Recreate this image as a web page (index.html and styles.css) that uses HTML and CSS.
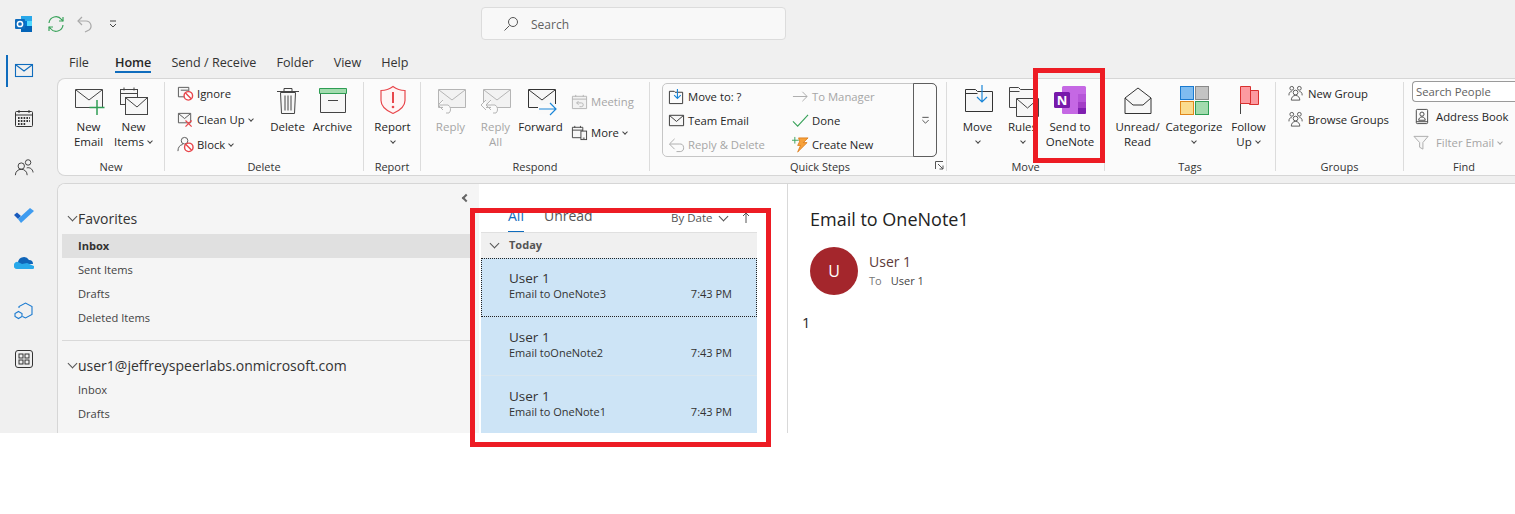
FILE: index.html
```html
<!DOCTYPE html>
<html lang="en">
<head>
<meta charset="utf-8">
<title>Outlook</title>
<link rel="stylesheet" href="styles.css">
</head>
<body>
<div class="app">
  <header class="titlebar">
    <div class="qat">
      <svg class="qat-logo" viewBox="0 0 18 18"><path fill="#28a8ea" d="M6 1h11v5H6z"/><path fill="#0078d4" d="M6 6h6v5H6z"/><path fill="#50d9ff" d="M12 6h5v5h-5z"/><path fill="#0364b8" d="M6 11h11v6H6z"/><rect fill="#0f6cbd" x="0" y="4" width="10" height="10" rx="1"/><circle cx="5" cy="9" r="2.600" fill="none" stroke="#fff" stroke-width="1.500"/></svg>
      <svg class="qat-sync" viewBox="0 0 18 18" fill="none" stroke="#3aa35b" stroke-width="1.200"><path d="M2 8a7 7 0 0 1 12.500-3.500L16 6"/><path d="M16 2v4h-4"/><path d="M16 10a7 7 0 0 1-12.500 3.500L2 12"/><path d="M2 16v-4h4"/></svg>
      <svg class="qat-undo" viewBox="0 0 18 18" fill="none" stroke="#a9a9a9" stroke-width="1.200"><path d="M6 2 2 6l4 4"/><path d="M2 6h8a5 5 0 0 1 3 9l-4 2"/></svg>
      <svg class="qat-more" viewBox="0 0 10 10" fill="none" stroke="#444" stroke-width="1"><path d="M2 2h6M2 5l3 3 3-3"/></svg>
    </div>
    <div class="searchbox">
      <svg class="search-ico" viewBox="0 0 16 16" fill="none" stroke="#555" stroke-width="1"><circle cx="10" cy="6" r="4.500"/><path d="M6.500 9.500 1.500 14.500"/></svg>
      <span class="search-text">Search</span>
    </div>
  </header>

  <div class="body">
    <nav class="rail">
      <div class="rail-item rail-active"><svg viewBox="0 0 20 20" fill="none" stroke="#0f6cbd" stroke-width="1.100"><rect x="1.500" y="3.500" width="17" height="12"/><path d="m2 4 8 6 8-6"/></svg></div>
      <div class="rail-item"><svg viewBox="0 0 20 20" fill="none" stroke="#333" stroke-width="1"><rect x="1.500" y="2.500" width="17" height="15" rx="1"/><path d="M5 1v3M15 1v3M2 6h16" /><path stroke-dasharray="1.600 1.200" stroke-width="2" d="M4 9h12M4 12h12M4 15h8"/></svg></div>
      <div class="rail-item"><svg viewBox="0 0 22 20" fill="none" stroke="#333" stroke-width="1"><circle cx="8" cy="9" r="3.500"/><path d="M1.500 19c0-4 3-6.500 6.500-6.500s6.500 2.500 6.500 6.500"/><circle cx="15.500" cy="5" r="3"/><path d="M14 11c3-1 6.500 1 7 5"/></svg></div>
      <div class="rail-item"><svg viewBox="0 0 20 20"><path fill="#185abd" d="M0 10l3-2.500 4 3.500-3 3z"/><path fill="#3f9cf0" d="M4 14 16 3l4 3L7 18z"/></svg></div>
      <div class="rail-item"><svg viewBox="0 0 20 20"><path fill="#0f64b8" d="M4 9a6 6 0 0 1 11-2 4 4 0 0 1 4 4H2z"/><path fill="#28a8ea" d="M0 12a3 3 0 0 1 4-3l4 2 5-1 7 3a2 2 0 0 1-2 3H3a3 3 0 0 1-3-4z"/></svg></div>
      <div class="rail-item"><svg viewBox="0 0 20 20" fill="none" stroke="#1a7ad0" stroke-width="1.100"><path d="M5 7V5.500L11.500 2 18 5.500v8L11.500 17l-3-1.500"/><path d="M4.500 10.500 8 12.500v3L4.500 17.500 1 15.500v-3z"/></svg></div>
      <div class="rail-item"><svg viewBox="0 0 20 20" fill="none" stroke="#333" stroke-width="1"><rect x="1.500" y="1.500" width="17" height="17" rx="2.500"/><rect x="5" y="5" width="4" height="4"/><rect x="11" y="5" width="4" height="4"/><rect x="5" y="11" width="4" height="4"/><rect x="11" y="11" width="4" height="4"/></svg></div>
    </nav>

    <div class="main">
      <div class="tabs">
        <span class="tab tab-file">File</span>
        <span class="tab tab-active">Home</span>
        <span class="tab">Send / Receive</span>
        <span class="tab">Folder</span>
        <span class="tab">View</span>
        <span class="tab">Help</span>
      </div>

      <section class="ribbon">
        <div class="group g-new">
          <div class="items">
            <div class="btn">
              <svg class="lg" viewBox="0 0 32 32" fill="#f7f7f7" stroke="#444"><path d="M2.500 4.500h27v18h-27z"/><path fill="none" d="m3 5 13 10L29 5"/><path fill="none" stroke="#2f9e54" stroke-width="1.500" d="M24 15v15M16.500 22.500h15"/></svg>
              <span class="lbl">New<br>Email</span>
            </div>
            <div class="btn">
              <svg class="lg" viewBox="0 0 32 32" fill="#f7f7f7" stroke="#444"><rect x="2.500" y="4.500" width="17" height="15"/><path d="M2.500 8.500h17M6 2.500v3M16 2.500v3" fill="none"/><rect x="7.500" y="12.500" width="22" height="17"/><path fill="none" d="m8 13 11 9 10-9"/></svg>
              <span class="lbl">New<br>Items <i class="chev"></i></span>
            </div>
          </div>
          <div class="glabel">New</div>
        </div>

        <div class="group g-delete">
          <div class="items">
            <div class="stack">
              <div class="row"><svg class="sm" viewBox="0 0 18 18" fill="#f7f7f7" stroke="#555"><path d="M1.500 2.500h11v10h-11z"/><path fill="none" d="M4 5.500h8"/><circle cx="12" cy="11.500" r="4.500" fill="#fff" stroke="#e8474c" stroke-width="1.500"/><path stroke="#e8474c" stroke-width="1.500" d="m9 8.500 6 6"/></svg><span>Ignore</span></div>
              <div class="row"><svg class="sm" viewBox="0 0 18 18" fill="#f7f7f7" stroke="#555"><path d="M1.500 2.500h13v10h-13z"/><path fill="none" d="m2 3 6 5 6-5"/><path fill="none" stroke="#e8474c" stroke-width="1.300" d="m9 10 6.500 6.500M15.500 10 9 16.500"/></svg><span>Clean Up <i class="chev"></i></span></div>
              <div class="row"><svg class="sm" viewBox="0 0 18 18" fill="none" stroke="#555"><circle cx="8" cy="5" r="3.500"/><path d="M1 16c0-4 2-6.500 5-7"/><circle cx="12.500" cy="12" r="4.500" fill="#fff" stroke="#e8474c" stroke-width="1.500"/><path stroke="#e8474c" stroke-width="1.500" d="m9.500 9 6 6"/></svg><span>Block <i class="chev"></i></span></div>
            </div>
            <div class="btn">
              <svg class="lg" viewBox="0 0 32 32" fill="#f7f7f7" stroke="#444"><path d="M8.500 7.500h15l-1 21h-13z" /><path fill="none" d="M5 6.500h22M12 6V3.500h8V6M13 10.500v15M16 10.500v15M19 10.500v15"/></svg>
              <span class="lbl">Delete</span>
            </div>
            <div class="btn">
              <svg class="lg" viewBox="0 0 32 32" stroke="#444"><path fill="#f7f7f7" d="M3.500 8.500h25v19h-25z"/><path fill="#a2dbae" stroke="#2f9e54" d="M2.500 3.500h27v5h-27z"/><path fill="none" d="M11 15.500h10"/></svg>
              <span class="lbl">Archive</span>
            </div>
          </div>
          <div class="glabel">Delete</div>
        </div>

        <div class="group g-report">
          <div class="items">
            <div class="btn btn-wide">
              <svg class="lg" viewBox="0 0 32 32"><path fill="#fff5f5" stroke="#e8474c" stroke-width="1.200" d="M16 1.500c4 3 8 4 12 4v10c0 6-5 10-12 13-7-3-12-7-12-13v-10c4 0 8-1 12-4z"/><path stroke="#e8474c" stroke-width="2" d="M16 7v11"/><circle cx="16" cy="22" r="1.300" fill="#e8474c"/></svg>
              <span class="lbl">Report<br><i class="chev"></i></span>
            </div>
          </div>
          <div class="glabel">Report</div>
        </div>

        <div class="group g-respond">
          <div class="items">
            <div class="btn off">
              <svg class="lg" viewBox="0 0 32 32" fill="#f2f2f2" stroke="#b5b5b5"><path d="M3.500 4.500h27v18h-27z"/><path fill="none" d="m4 5 13 10L30 5"/><path fill="#fafafa" d="M8 15l-5 5 5 5M3 20h10a5 5 0 0 1 1 8h-3"/></svg>
              <span class="lbl">Reply</span>
            </div>
            <div class="btn off">
              <svg class="lg" viewBox="0 0 32 32" fill="#f2f2f2" stroke="#b5b5b5"><path d="M3.500 4.500h27v18h-27z"/><path fill="none" d="m4 5 13 10L30 5"/><path fill="#fafafa" d="M6 15l-5 5 5 5M11 15l-5 5 5 5M6 20h9a5 5 0 0 1 1 8h-3"/></svg>
              <span class="lbl">Reply<br>All</span>
            </div>
            <div class="btn">
              <svg class="lg" viewBox="0 0 32 32" fill="#f7f7f7" stroke="#333"><path d="M3.500 4.500h27v18h-27z"/><path fill="none" d="m4 5 13 10L30 5"/><path fill="#fafafa" stroke="none" d="M13 19h19v10H13z"/><path fill="none" stroke="#1a86d8" stroke-width="1.200" d="M14 24h17M25 18l6 6-6 6"/></svg>
              <span class="lbl">Forward</span>
            </div>
            <div class="stack stack-respond">
              <div class="row off"><svg class="sm" viewBox="0 0 18 18" fill="#f2f2f2" stroke="#b5b5b5"><path d="M1.500 3.500h15v13h-15zM1.500 6.500h15M5 2v2M13 2v2"/><path fill="none" d="M8 8.500 6 10.500l2 2M6 10.500h5a2 2 0 0 1 0 4h-2"/></svg><span>Meeting</span></div>
              <div class="row"><svg class="sm" viewBox="0 0 18 18" fill="#f7f7f7" stroke="#444"><path d="M1.500 3.500h11v11h-11zM1.500 6.500h11M4 2v2M10 2v2"/><rect x="10.500" y="7.500" width="6" height="9"/><path d="M12.500 15h2"/></svg><span>More <i class="chev"></i></span></div>
            </div>
          </div>
          <div class="glabel">Respond</div>
        </div>

        <div class="group g-quick">
          <div class="items">
            <div class="qs">
              <div class="qs-grid">
                <div class="row qrow"><svg class="sm" viewBox="0 0 18 18" fill="none" stroke="#333"><path d="M1.500 3.500h5l1 1h8v12h-14z"/><path stroke="#1a86d8" stroke-width="1.200" d="M10 1v10M6.500 7.500 10 11l3.500-3.500"/></svg><span>Move to: ?</span></div>
                <div class="row qrow off"><svg class="sm" viewBox="0 0 18 18" fill="none" stroke="#aaa"><path d="M1 9h15M11 4l5 5-5 5"/></svg><span>To Manager</span></div>
                <div class="row qrow"><svg class="sm" viewBox="0 0 18 18" fill="#f7f7f7" stroke="#333"><path d="M1.500 3.500h15v11h-15z"/><path fill="none" d="m2 4 7 6 7-6"/></svg><span>Team Email</span></div>
                <div class="row qrow"><svg class="sm" viewBox="0 0 18 18" fill="none" stroke="#3aa35b" stroke-width="1.200"><path d="m1 10 5 5L17 3"/></svg><span>Done</span></div>
                <div class="row qrow off"><svg class="sm" viewBox="0 0 18 18" fill="none" stroke="#aaa"><path d="M7 3 1.500 8.500 7 14M2 8.500h10a4 4 0 0 1 1 8H9"/></svg><span>Reply &amp; Delete</span></div>
                <div class="row qrow"><svg class="sm" viewBox="0 0 18 18"><path fill="#f7a13a" stroke="#d9730d" stroke-width=".8" d="M7 2h10l-5 5h4L6 17l3-7H6l2-4z"/><path stroke="#3aa35b" fill="none" d="M3 1v7M0 4.500h7"/></svg><span>Create New</span></div>
              </div>
              <div class="qs-more"><svg viewBox="0 0 10 10" fill="none" stroke="#444" stroke-width="1"><path d="M1.500 1.500h7M1.500 4.500 5 8l3.500-3.500"/></svg></div>
            </div>
          </div>
          <div class="glabel glabel-quick">Quick Steps<svg class="launcher" viewBox="0 0 9 9" fill="none" stroke="#555"><path d="M.5 8V.5H8M3 3l5 5M8 4.500V8H4.500"/></svg></div>
        </div>

        <div class="group g-move">
          <div class="items">
            <div class="btn">
              <svg class="lg" viewBox="0 0 32 32" fill="none" stroke="#333"><path fill="#f7f7f7" d="M3.500 4.500h10l2 2h15v20h-27z"/><path d="M3.500 8.500h12"/><path stroke="#1a86d8" stroke-width="1.200" d="M20 0v17M15 12l5 5 5-5"/></svg>
              <span class="lbl">Move<br><i class="chev"></i></span>
            </div>
            <div class="btn">
              <svg class="lg" viewBox="0 0 32 32" fill="#f7f7f7" stroke="#444"><path d="M2.500 2.500h9l2 2h13v18h-24z"/><path fill="none" d="M2.500 6.500h10"/><path d="M9.500 13.500h22v18h-22z"/><path fill="none" d="m10 14 10.500 9L31 14"/></svg>
              <span class="lbl">Rules<br><i class="chev"></i></span>
            </div>
            <div class="btn btn-onenote">
              <svg class="lg" viewBox="0 0 32 32"><rect x="8" y="1" width="24" height="28" rx="1.500" fill="#c568e4"/><path fill="#b655d8" d="M24 9h8v8h-8z"/><path fill="#a33ec6" d="M24 17h8v6h-8z"/><path fill="#7f1fb0" d="M24 23h8v4.500a1.500 1.500 0 0 1-1.500 1.500H24z"/><rect x="0" y="7" width="16" height="16" rx="1.500" fill="#7719aa"/><text class="on-n" x="8" y="19.500" text-anchor="middle">N</text></svg>
              <span class="lbl">Send to<br>OneNote</span>
            </div>
          </div>
          <div class="glabel">Move</div>
        </div>

        <div class="group g-tags">
          <div class="items">
            <div class="btn">
              <svg class="lg" viewBox="0 0 32 32" fill="#f7f7f7" stroke="#333"><path d="M3 13 16 3l13 10v15.500H3z"/><path fill="none" d="m3 13 8 7h10l8-7"/></svg>
              <span class="lbl">Unread/<br>Read</span>
            </div>
            <div class="btn btn-cat">
              <svg class="lg" viewBox="0 0 32 32"><rect x="2.500" y="1.500" width="13" height="13" fill="#7fbcf0" stroke="#1a7ad0"/><rect x="17.500" y="1.500" width="13" height="13" fill="#c3c3c3" stroke="#8a8a8a"/><rect x="2.500" y="16.500" width="13" height="13" fill="#fbdc8f" stroke="#e0861a"/><rect x="17.500" y="16.500" width="13" height="13" fill="#a2dbae" stroke="#2f9e54"/></svg>
              <span class="lbl">Categorize<br><i class="chev"></i></span>
            </div>
            <div class="btn">
              <svg class="lg" viewBox="0 0 32 32" stroke="#d9302f"><path fill="none" stroke="#444" d="M7.500 2v27"/><path fill="#fc9aa0" d="M16.500 5.500h9v14h-9z"/><path fill="#fc9aa0" d="M7.500 1.500h10v17h-10z"/></svg>
              <span class="lbl">Follow<br>Up <i class="chev"></i></span>
            </div>
          </div>
          <div class="glabel">Tags</div>
        </div>

        <div class="group g-groups">
          <div class="items">
            <div class="stack">
              <div class="row"><svg class="sm" viewBox="0 0 18 18" fill="none" stroke="#555"><circle cx="4" cy="3.500" r="2"/><circle cx="12" cy="3.500" r="2"/><circle cx="8" cy="8" r="2.500"/><path d="M1 11c0-3 1-4 3-4M15 11c0-3-1-4-3-4M3.500 16c0-3 2-5 4.500-5s4.500 2 4.500 5z"/></svg><span>New Group</span></div>
              <div class="row"><svg class="sm" viewBox="0 0 18 18" fill="none" stroke="#555"><circle cx="4" cy="3.500" r="2"/><circle cx="12" cy="3.500" r="2"/><circle cx="8" cy="8" r="2.500"/><path d="M1 11c0-3 1-4 3-4M15 11c0-3-1-4-3-4M3.500 16c0-3 2-5 4.500-5s4.500 2 4.500 5z"/></svg><span>Browse Groups</span></div>
            </div>
          </div>
          <div class="glabel">Groups</div>
        </div>

        <div class="group g-find">
          <div class="items">
            <div class="stack stack-find">
              <div class="people-search">Search People</div>
              <div class="row row-gap"><svg class="sm" viewBox="0 0 18 18" fill="none" stroke="#444"><rect x="3.500" y="1.500" width="12" height="15" rx="1"/><circle cx="9.500" cy="6.500" r="2.200"/><path d="M6 13c0-2 1.500-3.500 3.500-3.500S13 11 13 13zM3.500 14.500h12"/></svg><span>Address Book</span></div>
              <div class="row row-gap off"><svg class="sm" viewBox="0 0 18 18" fill="#f7f7f7" stroke="#aaa"><path d="M1 2.500h15L10.500 9v7L7 14V9z"/></svg><span>Filter Email <i class="chev"></i></span></div>
            </div>
          </div>
          <div class="glabel glabel-find">Find</div>
        </div>
      </section>

      <section class="content">
        <aside class="navpane">
          <i class="collapse"></i>
          <div class="folder-head folder-head-fav"><i class="fold"></i>Favorites</div>
          <div class="folder folder-sel">Inbox</div>
          <div class="folder">Sent Items</div>
          <div class="folder">Drafts</div>
          <div class="folder">Deleted Items</div>
          <div class="nav-sep"></div>
          <div class="folder-head"><i class="fold"></i>user1@jeffreyspeerlabs.onmicrosoft.com</div>
          <div class="folder">Inbox</div>
          <div class="folder">Drafts</div>
        </aside>

        <div class="listpane">
          <div class="list-tabs">
            <span class="ltab ltab-on">All</span>
            <span class="ltab">Unread</span>
            <span class="sort">By Date <i class="fold fold-sort"></i></span>
            <svg class="sort-arrow" viewBox="0 0 8 11" fill="none" stroke="#555"><path d="M4 11V1M1 4l3-3 3 3"/></svg>
          </div>
          <div class="list-group"><i class="fold"></i>Today</div>
          <div class="msg msg-focus">
            <div class="msg-from">User 1</div>
            <div class="msg-line"><span>Email to OneNote3</span><span class="msg-time">7:43 PM</span></div>
          </div>
          <div class="msg">
            <div class="msg-from">User 1</div>
            <div class="msg-line"><span>Email toOneNote2</span><span class="msg-time">7:43 PM</span></div>
          </div>
          <div class="msg">
            <div class="msg-from">User 1</div>
            <div class="msg-line"><span>Email to OneNote1</span><span class="msg-time">7:43 PM</span></div>
          </div>
        </div>

        <article class="reading">
          <h1 class="subject">Email to OneNote1</h1>
          <div class="sender">
            <div class="avatar">U</div>
            <div>
              <div class="sender-name">User 1</div>
              <div class="sender-to"><span class="to">To</span>User 1</div>
            </div>
          </div>
          <p class="msg-body">1</p>
        </article>
      </section>
    </div>
  </div>
</div>
<div class="mark mark-onenote"></div>
<div class="mark mark-list"></div>
</body>
</html>
```

FILE: styles.css
```css
* { box-sizing: border-box; }
html, body { margin: 0; padding: 0; }
body {
  position: relative;
  height: 514px;
  overflow: hidden;
  background: #fff;
  font-family: "Open Sans", "Noto Sans", sans-serif;
  font-size: 12px;
  color: #262626;
}
i { font-style: normal; }
svg { display: block; flex: none; }

.app { height: 433px; background: #f0f0f0; display: flex; flex-direction: column; overflow: hidden; }

.titlebar { height: 48px; flex: none; display: flex; align-items: flex-start; padding-top: 7px; }
.qat { width: 481px; height: 33px; padding-left: 15px; display: flex; align-items: center; }
.qat-logo { width: 18px; height: 18px; }
.qat-sync { width: 18px; height: 18px; margin-left: 14px; }
.qat-undo { width: 18px; height: 18px; margin-left: 11px; }
.qat-more { width: 10px; height: 10px; margin-left: 14px; }
.searchbox {
  width: 305px; height: 33px; display: flex; align-items: center;
  background: #f8f8f8; border: 1px solid #dcdcdc; border-radius: 4px;
  padding-left: 21px; color: #616161; font-size: 12px;
}
.search-ico { width: 16px; height: 16px; margin-right: 12px; }
.search-text { padding-top: 2px; }

.body { flex: 1; min-height: 0; display: flex; }

.rail { width: 57px; flex: none; display: flex; flex-direction: column; margin-top: -1px; }
.rail-item { height: 48px; flex: none; display: flex; align-items: center; justify-content: center; padding-right: 9px; }
.rail-item svg { width: 20px; height: 20px; }
.rail-active { position: relative; }
.rail-active::before { content: ""; position: absolute; left: 6px; top: 8px; width: 2px; height: 32px; background: #0f6cbd; }

.main { flex: 1; min-width: 0; display: flex; flex-direction: column; }

.tabs { height: 30px; flex: none; display: flex; gap: 20px; padding: 5px 0 0 12px; font-size: 12.600px; color: #333; }
.tab { height: 20px; line-height: 19px; }
.tab-file { margin-right: 6px; }
.tab-active { font-weight: 600; border-bottom: 2px solid #0f6cbd; color: #262626; }

.ribbon {
  height: 98px; flex: none; display: flex;
  background: #fbfbfb; border: 1px solid #d6d6d6; border-right: 0;
  border-radius: 8px 0 0 8px; padding: 3px 0 4px;
  overflow: hidden;
}
.group { flex: none; display: flex; flex-direction: column; border-right: 1px solid #dcdcdc; height: 100%; }
.g-new { width: 107px; }
.g-delete { width: 199px; }
.g-report { width: 57px; }
.g-respond { width: 229px; }
.g-quick { width: 297px; }
.g-move { width: 158px; }
.g-tags { width: 171px; }
.g-groups { width: 128px; }
.g-find { flex: 1; border-right: 0; }

.items { flex: 1; min-height: 0; display: flex; padding-top: 3px; }
.g-new .items { padding-left: 8px; }
.g-delete .items { padding-left: 12px; }
.g-respond .items { padding-left: 7px; }
.g-quick .items { padding: 1px 0 0 12px; }
.g-move .items { padding-left: 8px; }
.g-tags .items { padding-left: 10px; }
.g-groups .items { padding-left: 12px; }
.g-find .items { padding-left: 8px; padding-top: 0; }

.glabel { position: relative; height: 9px; flex: none; text-align: center; font-size: 11px; line-height: 10px; color: #333; white-space: nowrap; }
.glabel-quick { padding-left: 44px; }
.glabel-find { padding-right: 8px; }

.btn { width: 45px; flex: none; display: flex; flex-direction: column; align-items: center; font-size: 11.500px; }
.btn-wide { width: 57px; }
.btn-onenote { width: 48px; margin-left: 1px; }
.btn-cat { width: 60px; margin: 0 2px 0 4px; }
.lg { width: 32px; height: 32px; overflow: visible; }
.lbl { display: block; text-align: center; line-height: 15px; margin-top: 2px; white-space: nowrap; }
.off { color: #a6a6a6; }
.chev { display: inline-block; width: 4px; height: 4px; border-right: 1px solid #444; border-bottom: 1px solid #444; transform: rotate(45deg); margin: 0 1px 3px 1px; }
.off .chev { border-color: #a6a6a6; }

.stack { width: 88px; flex: none; display: flex; flex-direction: column; margin-top: -4px; }
.stack-respond { width: 80px; margin: 0 0 0 8px; padding-top: 4px; row-gap: 5.500px; }
.stack-find { width: 100%; margin-top: 0; }
.g-groups .stack { width: 110px; }
.row { height: 25.500px; flex: none; display: flex; align-items: center; gap: 3px; font-size: 11.300px; white-space: nowrap; }
.row-gap { gap: 6px; margin-left: 1px; }
.sm { width: 17px; height: 17px; }

.qs { width: 275px; height: 74px; display: flex; background: #fbfbfb; border: 1px solid #c6c6c6; border-radius: 5px; }
.qs-grid { width: 251px; flex: none; display: grid; grid-template-columns: 124px 122px; grid-auto-rows: 24px; padding-left: 5px; }
.qrow { height: 24px; }
.qs-more { flex: 1; border: 1px solid #5e5e5e; border-radius: 0 5px 5px 0; margin: -1px; display: flex; align-items: center; justify-content: center; }
.qs-more svg { width: 9px; height: 9px; }
.launcher { position: absolute; right: 2px; top: -1px; width: 9px; height: 9px; }

.people-search { height: 21px; width: 120px; flex: none; margin: -1px 0 2px; border: 1px solid #9a9a9a; border-right: 0; border-radius: 4px 0 0 4px; background: #fff; color: #616161; font-size: 11.300px; line-height: 19px; padding-left: 3px; white-space: nowrap; }

.on-n { font-family: "Open Sans", sans-serif; font-weight: 700; font-size: 13px; fill: #fff; }

.content { flex: 1; min-height: 0; margin-top: 7px; display: flex; background: #fff; border-radius: 8px 0 0 0; overflow: hidden; border-top: 1px solid #d6d6d6; border-left: 1px solid #d6d6d6; }

.navpane { position: relative; width: 421px; flex: none; background: #f5f5f5; padding: 22px 9px 0 4px; color: #424242; }
.collapse { position: absolute; right: 10px; top: 11px; width: 6px; height: 6px; border-left: 2px solid #666; border-bottom: 2px solid #666; transform: rotate(45deg); }
.folder-head { height: 24px; display: flex; align-items: center; font-size: 14px; padding-left: 5px; color: #333; white-space: nowrap; margin-bottom: 1px; }
.folder-head-fav { margin-bottom: 4px; }
.fold { display: inline-block; width: 7px; height: 7px; border-right: 1px solid #555; border-bottom: 1px solid #555; transform: rotate(45deg); margin: -3px 2px 0 2px; flex: none; }
.folder { height: 24px; line-height: 24px; padding-left: 16px; font-size: 11.100px; }
.folder-sel { background: #e0e0e0; font-weight: 700; color: #333; }
.nav-sep { height: 1px; background: #d9d9d9; margin: 10px 0 12px; }

.listpane { width: 309px; flex: none; padding: 0 30px 0 2px; border-right: 1px solid #d9d9d9; background: #fff; }
.list-tabs { position: relative; height: 49px; display: flex; align-items: flex-end; gap: 20px; padding: 0 0 0 27px; font-size: 14px; color: #555; border-bottom: 1px solid #e0e0e0; }
.ltab { height: 24px; line-height: 16px; white-space: nowrap; }
.ltab-on { color: #0f6cbd; border-bottom: 1px solid #0f6cbd; }
.sort { position: absolute; left: 190px; bottom: 7px; font-size: 11.500px; display: flex; align-items: center; white-space: nowrap; }
.fold-sort { margin-left: 8px; }
.sort-arrow { position: absolute; left: 261px; bottom: 9px; width: 8px; height: 11px; }
.list-group { height: 25px; background: #f0f0f0; display: flex; align-items: center; font-size: 11px; font-weight: 700; color: #555; padding: 0 0 2px 8px; }
.list-group .fold { margin-right: 11px; }
.msg { height: 59px; background: #cde4f6; padding: 12px 25px 0 28px; border-bottom: 1px solid #d9e6ef; }
.msg-focus { border: 1px dotted #222; padding: 11px 24px 0 27px; height: 59px; }
.msg-from { font-size: 13.500px; line-height: 16px; color: #333; }
.msg-line { display: flex; justify-content: space-between; font-size: 11px; line-height: 16px; color: #333; white-space: nowrap; }

.reading { flex: 1; min-width: 0; padding: 0 0 0 14px; color: #262626; }
.subject { margin: 22px 0 0 8px; font-size: 18px; font-weight: 400; line-height: 26px; color: #222; }
.sender { display: flex; align-items: center; gap: 11px; margin: 15px 0 0 8px; }
.avatar { width: 48px; height: 48px; border-radius: 50%; background: #a4262c; color: #fff; font-size: 16px; display: flex; align-items: center; justify-content: center; }
.sender-name { font-size: 14px; line-height: 20px; color: #5c3a3a; }
.sender-to { font-size: 11px; line-height: 18px; color: #444; }
.to { color: #777; margin-right: 9px; }
.msg-body { margin: 18px 0 0; font-size: 14.500px; line-height: 20px; }

.mark { position: absolute; border: 5px solid #ed1c24; pointer-events: none; }
.mark-onenote { left: 1033px; top: 68px; width: 72px; height: 95px; }
.mark-list { left: 470px; top: 208px; width: 301px; height: 239px; }
```
